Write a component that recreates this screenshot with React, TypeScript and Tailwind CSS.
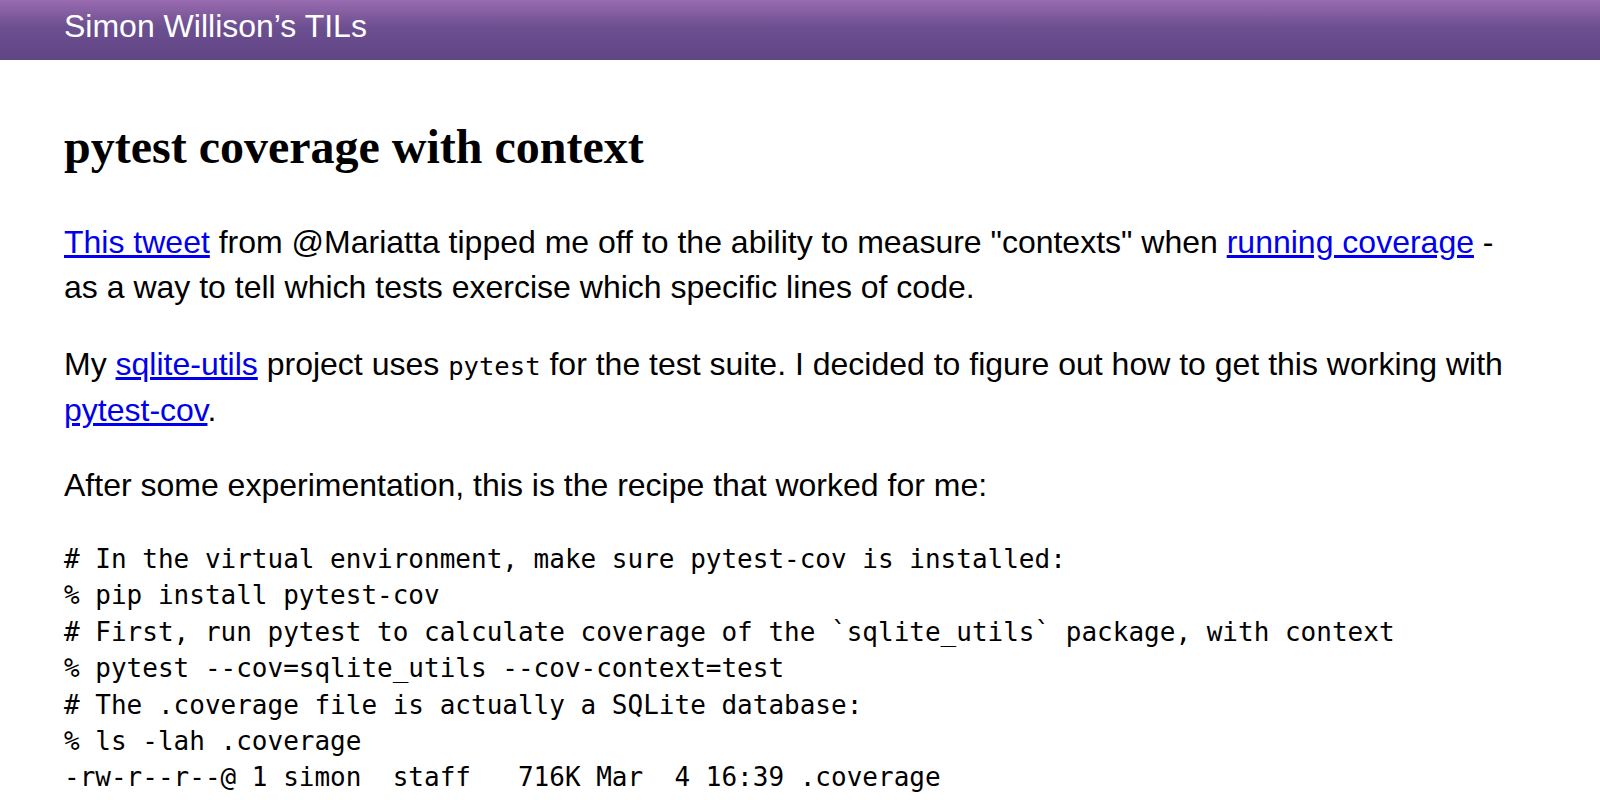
export default function App() {
  const code = [
    "# In the virtual environment, make sure pytest-cov is installed:",
    "% pip install pytest-cov",
    "# First, run pytest to calculate coverage of the `sqlite_utils` package, with context",
    "% pytest --cov=sqlite_utils --cov-context=test",
    "# The .coverage file is actually a SQLite database:",
    "% ls -lah .coverage",
    "-rw-r--r--@ 1 simon  staff   716K Mar  4 16:39 .coverage",
  ].join("\n");

  return (
    <div className="min-h-screen bg-white">
      <header className="h-[60px] pt-[8px] pl-16 bg-[linear-gradient(180deg,#9a6bb0_0%,#6c4f90_45%,#604585_100%)]">
        <div className="text-[32px] leading-[36px] text-white font-['Liberation_Sans',Arial,sans-serif]">
          Simon Willison’s TILs
        </div>
      </header>
      <main className="pl-16 pr-[84px] font-['Liberation_Sans',Arial,sans-serif] text-[32px] leading-[44.8px] text-black">
        <h1 className="mt-[60px] font-['Liberation_Serif','Times_New_Roman',serif] font-bold text-[48px] leading-[54px]">
          pytest coverage with context
        </h1>
        <p className="mt-[46px]">
          <a href="#" className="text-[#0000ee] underline">This tweet</a> from @Mariatta tipped me off to the ability to measure "contexts" when{" "}
          <a href="#" className="text-[#0000ee] underline">running coverage</a> - as a way to tell which tests exercise which specific lines of code.
        </p>
        <p className="mt-8">
          My <a href="#" className="text-[#0000ee] underline">sqlite-utils</a> project uses{" "}
          <code className="font-['DejaVu_Sans_Mono',monospace] text-[25.6px]">pytest</code> for the test suite. I decided to figure out how to get this working with{" "}
          <a href="#" className="text-[#0000ee] underline">pytest-cov</a>.
        </p>
        <p className="mt-[30px]">After some experimentation, this is the recipe that worked for me:</p>
        <pre className="mt-[33px] font-['DejaVu_Sans_Mono',monospace] text-[26px] leading-[36.4px] whitespace-pre text-black">
          {code}
        </pre>
      </main>
    </div>
  );
}
